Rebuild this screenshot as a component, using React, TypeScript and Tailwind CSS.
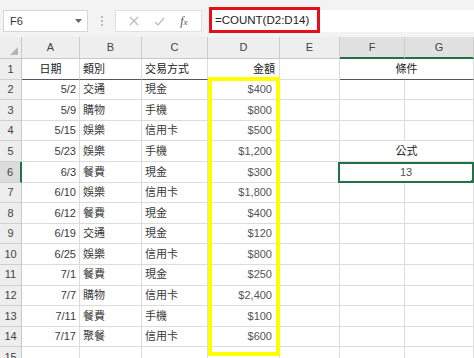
import React from "react";

const cols = ["A", "B", "C", "D", "E", "F", "G"];

const data = [
  ["5/2", "交通", "現金", "$400"],
  ["5/9", "購物", "手機", "$800"],
  ["5/15", "娛樂", "信用卡", "$500"],
  ["5/23", "娛樂", "手機", "$1,200"],
  ["6/3", "餐費", "現金", "$300"],
  ["6/10", "娛樂", "信用卡", "$1,800"],
  ["6/12", "餐費", "現金", "$400"],
  ["6/19", "交通", "現金", "$120"],
  ["6/25", "娛樂", "信用卡", "$800"],
  ["7/1", "餐費", "現金", "$250"],
  ["7/7", "購物", "信用卡", "$2,400"],
  ["7/11", "餐費", "手機", "$100"],
  ["7/17", "聚餐", "信用卡", "$600"],
];

const font = "font-['Liberation_Sans','Noto_Sans_CJK_TC',sans-serif]";
const cell = "h-[20.6px] border-r border-b border-[#dcdcdc] bg-white flex items-center text-[11px] text-[#3a3a3a] overflow-hidden whitespace-nowrap";

function RowHead({ n, active }: { n: number; active?: boolean }) {
  return (
    <div
      className={`h-[20.6px] flex items-center justify-center text-[11px] text-[#444] border-b border-[#cfcfcf] ${
        active ? "bg-[#dcdcdc] border-r-2 border-r-[#217346]" : "bg-[#eeeeee] border-r border-r-[#c8c8c8]"
      }`}
    >
      {n}
    </div>
  );
}

function FormulaBar() {
  return (
    <div className="h-[37px] flex items-start pt-[10px]">
      <div className="ml-[3px] w-[85px] h-[22px] bg-white border border-[#d6d6d6] flex items-center justify-between pl-[6px] pr-[5px] text-[11px] text-[#333]">
        <span>F6</span>
        <svg width="7" height="4" viewBox="0 0 7 4">
          <path d="M0 0h7L3.5 4z" fill="#666" />
        </svg>
      </div>
      <div className="w-[27px] h-[22px] flex flex-col items-center justify-center gap-[2px]">
        <span className="w-[2px] h-[2px] bg-[#b8b8b8]" />
        <span className="w-[2px] h-[2px] bg-[#b8b8b8]" />
        <span className="w-[2px] h-[2px] bg-[#b8b8b8]" />
      </div>
      <div className="w-[87px] h-[22px] bg-white border border-[#e0e0e0] flex items-center justify-around px-[6px]">
        <svg width="10" height="10" viewBox="0 0 10 10">
          <path d="M1 1l8 8M9 1l-8 8" stroke="#bdbdbd" strokeWidth="1.3" />
        </svg>
        <svg width="11" height="9" viewBox="0 0 11 9">
          <path d="M1 5l3 3 6-7" stroke="#bdbdbd" strokeWidth="1.3" fill="none" />
        </svg>
        <span className="font-['Liberation_Serif',serif] italic text-[12px] text-[#555] leading-none">
          f<span className="text-[9px]">x</span>
        </span>
      </div>
      <div className="ml-[7px] flex-1 h-[22px] bg-white flex items-center pl-[6px] text-[11.5px] text-[#222]">
        =COUNT(D2:D14)
      </div>
    </div>
  );
}

export default function App() {
  return (
    <div className={`relative w-[474px] h-[358px] overflow-hidden bg-[#f3f3f3] ${font}`}>
      <FormulaBar />

      <div className="grid grid-cols-[22px_58px_62px_66px_72px_60px_65px_69px]">
        {/* column headers */}
        <div className="h-[22px] bg-[#eeeeee] border-r border-b border-[#c8c8c8] flex items-end justify-end p-[3px]">
          <svg width="8" height="8" viewBox="0 0 8 8">
            <path d="M8 0v8H0z" fill="#b4b4b4" />
          </svg>
        </div>
        {cols.map((c) => {
          const sel = c === "F" || c === "G";
          return (
            <div
              key={c}
              className={`h-[22px] flex items-center justify-center text-[11px] text-[#444] border-r border-[#cccccc] ${
                sel ? "bg-[#e1e1e1] border-b-2 border-b-[#217346]" : "bg-[#eeeeee] border-b border-b-[#c8c8c8]"
              }`}
            >
              {c}
            </div>
          );
        })}

        {/* row 1 */}
        <RowHead n={1} />
        <div className={`${cell} justify-center !border-b-[#555] text-[#222]`}>日期</div>
        <div className={`${cell} pl-[3px] !border-b-[#555] text-[#222]`}>類別</div>
        <div className={`${cell} pl-[3px] !border-b-[#555] text-[#222]`}>交易方式</div>
        <div className={`${cell} justify-end pr-[4px] !border-b-[#555] text-[#222]`}>金額</div>
        <div className={cell} />
        <div className={`${cell} col-span-2 justify-center !border-b-[#555] text-[#222]`}>條件</div>

        {data.map((r, i) => {
          const n = i + 2;
          return (
            <React.Fragment key={n}>
              <RowHead n={n} active={n === 6} />
              <div className={`${cell} justify-end pr-[3px]`}>{r[0]}</div>
              <div className={`${cell} pl-[3px]`}>{r[1]}</div>
              <div className={`${cell} pl-[3px]`}>{r[2]}</div>
              <div className={`${cell} justify-end pr-[7px] text-[#555]`}>{r[3]}</div>
              <div className={cell} />
              {n === 5 ? (
                <div className={`${cell} col-span-2 justify-center text-[#222]`}>公式</div>
              ) : n === 6 ? (
                <div className={`${cell} col-span-2 justify-center relative !border-2 !border-[#217346] ml-[-2px] text-[#555]`}>
                  13
                  <span className="absolute right-[-3px] bottom-[-3px] w-[5px] h-[5px] bg-[#217346] border border-white" />
                </div>
              ) : (
                <>
                  <div className={cell} />
                  <div className={cell} />
                </>
              )}
            </React.Fragment>
          );
        })}

        {/* row 15 */}
        <RowHead n={15} />
        {cols.map((c) => (
          <div key={c} className={cell} />
        ))}
      </div>

      {/* annotations */}
      <div className="absolute left-[209px] top-[7px] w-[111px] h-[26px] border-[3px] border-[#e3101c]" />
      <div className="absolute left-[208px] top-[77px] w-[72px] h-[279px] border-[4px] border-[#ffff00]" />
    </div>
  );
}
